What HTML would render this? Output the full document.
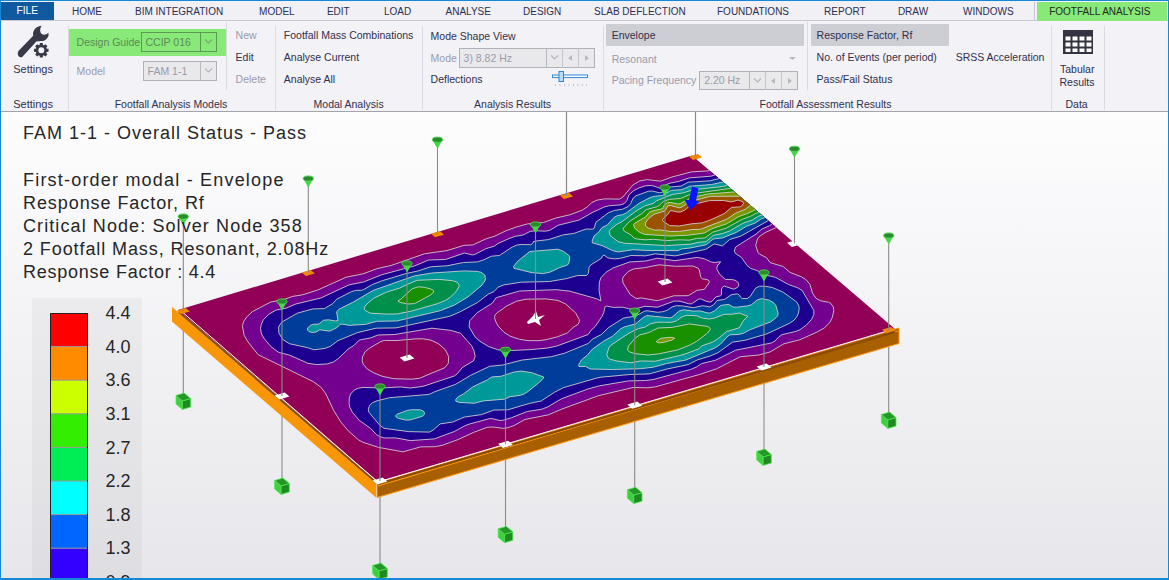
<!DOCTYPE html>
<html><head><meta charset="utf-8">
<style>
html,body{margin:0;padding:0;}
body{width:1169px;height:580px;position:relative;overflow:hidden;background:#f3f3f7;font-family:"Liberation Sans",sans-serif;}
.t{position:absolute;white-space:nowrap;}
.b{position:absolute;box-sizing:border-box;}
</style></head><body>
<!-- tab bar -->
<div class="b" style="left:0;top:0;width:1169px;height:21px;background:#f0f0f5;border-bottom:1px solid #c9c9d1"></div>
<div class="b" style="left:1;top:2px;left:1px;width:53px;height:18px;background:#10599f"></div>
<div class="b" style="left:1034px;top:2px;width:1px;height:18px;background:#c6c6ce"></div>
<div class="b" style="left:1037px;top:2px;width:130px;height:19px;background:#88e878"></div>
<!-- ribbon -->
<div class="b" style="left:0;top:21px;width:1169px;height:91px;background:#f3f2f7;border-bottom:1px solid #a4a4ac"></div>
<!-- separators -->
<div class="b" style="left:68px;top:26px;width:1px;height:84px;background:#dadae0"></div>
<div class="b" style="left:226px;top:22px;width:1px;height:68px;background:#dadae0"></div>
<div class="b" style="left:275px;top:26px;width:1px;height:84px;background:#dadae0"></div>
<div class="b" style="left:422px;top:26px;width:1px;height:84px;background:#dadae0"></div>
<div class="b" style="left:603px;top:26px;width:1px;height:84px;background:#dadae0"></div>
<div class="b" style="left:807px;top:22px;width:1px;height:68px;background:#dadae0"></div>
<div class="b" style="left:1051px;top:26px;width:1px;height:84px;background:#dadae0"></div>
<div class="b" style="left:1104px;top:26px;width:1px;height:84px;background:#dadae0"></div>
<!-- highlights -->
<div class="b" style="left:69px;top:29px;width:157px;height:27px;background:#88e878"></div>
<div class="b" style="left:606px;top:24px;width:198px;height:22px;background:#cdcdd4"></div>
<div class="b" style="left:811px;top:24px;width:138px;height:22px;background:#cdcdd4"></div>
<!-- combos -->
<div class="b" style="left:141px;top:32px;width:76px;height:20px;border:1px solid #5a9a52;"></div>
<div class="b" style="left:200px;top:32px;width:1px;height:20px;background:#5a9a52"></div>
<div class="b" style="left:143px;top:61px;width:74px;height:20px;background:#e9e9ec;border:1px solid #b0b0b8;"></div>
<div class="b" style="left:200px;top:61px;width:1px;height:20px;background:#b8b8c0"></div>
<div class="b" style="left:459px;top:48px;width:136px;height:20px;background:#e9e9ec;border:1px solid #b0b0b8;"></div>
<div class="b" style="left:546px;top:48px;width:1px;height:20px;background:#b8b8c0"></div>
<div class="b" style="left:562px;top:48px;width:1px;height:20px;background:#c4c4cc"></div>
<div class="b" style="left:578px;top:48px;width:1px;height:20px;background:#c4c4cc"></div>
<div class="b" style="left:699px;top:71px;width:99px;height:19px;background:#e9e9ec;border:1px solid #b0b0b8;"></div>
<div class="b" style="left:749px;top:71px;width:1px;height:19px;background:#b8b8c0"></div>
<div class="b" style="left:765px;top:71px;width:1px;height:19px;background:#c4c4cc"></div>
<div class="b" style="left:781px;top:71px;width:1px;height:19px;background:#c4c4cc"></div>
<svg style="position:absolute;left:0;top:0" width="1169" height="112">
 <g fill="none" stroke-width="1.1">
  <path d="M205 39.5L208.5 43L212 39.5" stroke="#7aa874"/>
  <path d="M205 68.5L208.5 72L212 68.5" stroke="#b4b4bc"/>
  <path d="M551 55.5L554.5 59L558 55.5" stroke="#b4b4bc"/>
  <path d="M754 78.5L757.5 82L761 78.5" stroke="#b4b4bc"/>
 </g>
 <g fill="#b8b8c0">
  <path d="M572 55L568 58L572 61Z"/><path d="M585 55L589 58L585 61Z"/>
  <path d="M775 78L771 81L775 84Z"/><path d="M788 78L792 81L788 84Z"/>
  <path d="M789 57H796L792.5 60Z"/>
 </g>
 <!-- slider -->
 <rect x="552.5" y="75" width="35" height="2.6" fill="#fff" stroke="#2d86d8" stroke-width="1"/>
 <rect x="559" y="71.5" width="4.5" height="10" fill="#bcd8f4" stroke="#2d86d8" stroke-width="1"/>
 <path d="M555 85h1M559.5 85h1M564 85h1M568.5 85h1M573 85h1M577.5 85h1M582 85h1M586 85h1" stroke="#9a9aa5" stroke-width="1"/>
 <!-- wrench + gear -->
 <g fill="#383846">
  <path d="M41.8 25.8 C36.5 26.2 32.2 30.2 33.2 35.8 L18.9 50.6 C17.1 52.6 17.6 55.9 19.6 57 C20.9 57.7 22.3 57.3 23.1 55.9 L36.6 41.2 C41.5 42.3 47.2 40.6 48.6 35.2 L48.3 32.6 C46.2 35.6 41.4 35.6 40.4 32 C39.8 29.6 40.4 27.3 41.8 25.8 Z"/>
  <circle cx="41.3" cy="50.3" r="9.2" fill="#f3f2f7"/>
  <path fill-rule="evenodd" d="M46.65 48.65 L48.55 48.83 L48.55 51.77 L46.65 51.95 L46.25 52.91 L47.47 54.39 L45.39 56.47 L43.91 55.25 L42.95 55.65 L42.77 57.55 L39.83 57.55 L39.65 55.65 L38.69 55.25 L37.21 56.47 L35.13 54.39 L36.35 52.91 L35.95 51.95 L34.05 51.77 L34.05 48.83 L35.95 48.65 L36.35 47.69 L35.13 46.21 L37.21 44.13 L38.69 45.35 L39.65 44.95 L39.83 43.05 L42.77 43.05 L42.95 44.95 L43.91 45.35 L45.39 44.13 L47.47 46.21 L46.25 47.69Z M41.30 47.30 A3 3 0 1 0 41.30 53.30 A3 3 0 1 0 41.30 47.30 Z"/>
 </g>
 <!-- table icon -->
 <rect x="1063" y="30" width="30" height="24" fill="#333342"/>
 <g fill="#ffffff">
  <rect x="1065.5" y="36.5" width="5" height="4"/><rect x="1072.5" y="36.5" width="5" height="4"/><rect x="1079.5" y="36.5" width="5" height="4"/><rect x="1086.5" y="36.5" width="5" height="4"/>
  <rect x="1065.5" y="42.5" width="5" height="4"/><rect x="1072.5" y="42.5" width="5" height="4"/><rect x="1079.5" y="42.5" width="5" height="4"/><rect x="1086.5" y="42.5" width="5" height="4"/>
  <rect x="1065.5" y="48.5" width="5" height="3.5"/><rect x="1072.5" y="48.5" width="5" height="3.5"/><rect x="1079.5" y="48.5" width="5" height="3.5"/><rect x="1086.5" y="48.5" width="5" height="3.5"/>
 </g>
</svg>
<div class="t" style="left:72.0px;top:5.54px;font-size:10px;line-height:12px;color:#2e2e52;">HOME</div>
<div class="t" style="left:135.0px;top:5.54px;font-size:10px;line-height:12px;color:#2e2e52;">BIM INTEGRATION</div>
<div class="t" style="left:259.1px;top:5.54px;font-size:10px;line-height:12px;color:#2e2e52;">MODEL</div>
<div class="t" style="left:326.9px;top:5.54px;font-size:10px;line-height:12px;color:#2e2e52;">EDIT</div>
<div class="t" style="left:384.0px;top:5.54px;font-size:10px;line-height:12px;color:#2e2e52;">LOAD</div>
<div class="t" style="left:445.5px;top:5.54px;font-size:10px;line-height:12px;color:#2e2e52;">ANALYSE</div>
<div class="t" style="left:523.0px;top:5.54px;font-size:10px;line-height:12px;color:#2e2e52;">DESIGN</div>
<div class="t" style="left:594.0px;top:5.54px;font-size:10px;line-height:12px;color:#2e2e52;">SLAB DEFLECTION</div>
<div class="t" style="left:717.0px;top:5.54px;font-size:10px;line-height:12px;color:#2e2e52;">FOUNDATIONS</div>
<div class="t" style="left:824.1px;top:5.54px;font-size:10px;line-height:12px;color:#2e2e52;">REPORT</div>
<div class="t" style="left:897.9px;top:5.54px;font-size:10px;line-height:12px;color:#2e2e52;">DRAW</div>
<div class="t" style="left:963.1px;top:5.54px;font-size:10px;line-height:12px;color:#2e2e52;">WINDOWS</div>
<div class="t" style="left:16.4px;top:4.63px;font-size:10.3px;line-height:12px;color:#ffffff;">FILE</div>
<div class="t" style="left:1049.2px;top:5.54px;font-size:10px;line-height:12px;color:#1e2a1e;">FOOTFALL ANALYSIS</div>
<div class="t" style="left:13.2px;top:63.19px;font-size:11px;line-height:12px;color:#30304c;">Settings</div>
<div class="t" style="left:13.2px;top:98.19px;font-size:11px;line-height:12px;color:#30304c;">Settings</div>
<div class="t" style="left:76.6px;top:36.06px;font-size:10.5px;line-height:12px;color:#5b8a55;">Design Guide</div>
<div class="t" style="left:76.6px;top:65.06px;font-size:10.5px;line-height:12px;color:#9a9aab;">Model</div>
<div class="t" style="left:145.5px;top:36.06px;font-size:10.5px;line-height:12px;color:#5b8a55;">CCIP 016</div>
<div class="t" style="left:147.6px;top:65.06px;font-size:10.5px;line-height:12px;color:#9a9aab;">FAM 1-1</div>
<div class="t" style="left:235.6px;top:29.06px;font-size:10.5px;line-height:12px;color:#9a9aab;">New</div>
<div class="t" style="left:235.6px;top:50.96px;font-size:10.5px;line-height:12px;color:#30304c;">Edit</div>
<div class="t" style="left:235.6px;top:72.96px;font-size:10.5px;line-height:12px;color:#9a9aab;">Delete</div>
<div class="t" style="left:114.7px;top:97.66px;font-size:10.5px;line-height:12px;color:#30304c;">Footfall Analysis Models</div>
<div class="t" style="left:283.8px;top:29.06px;font-size:10.5px;line-height:12px;color:#30304c;">Footfall Mass Combinations</div>
<div class="t" style="left:283.8px;top:51.26px;font-size:10.5px;line-height:12px;color:#30304c;">Analyse Current</div>
<div class="t" style="left:283.8px;top:73.36px;font-size:10.5px;line-height:12px;color:#30304c;">Analyse All</div>
<div class="t" style="left:313.6px;top:97.66px;font-size:10.5px;line-height:12px;color:#30304c;">Modal Analysis</div>
<div class="t" style="left:430.6px;top:29.86px;font-size:10.5px;line-height:12px;color:#30304c;">Mode Shape View</div>
<div class="t" style="left:430.6px;top:52.36px;font-size:10.5px;line-height:12px;color:#9a9aab;">Mode</div>
<div class="t" style="left:463.6px;top:52.36px;font-size:10.5px;line-height:12px;color:#9a9aab;">3) 8.82 Hz</div>
<div class="t" style="left:430.6px;top:72.96px;font-size:10.5px;line-height:12px;color:#30304c;">Deflections</div>
<div class="t" style="left:474.1px;top:97.96px;font-size:10.5px;line-height:12px;color:#30304c;">Analysis Results</div>
<div class="t" style="left:611.7px;top:29.26px;font-size:10.5px;line-height:12px;color:#30304c;">Envelope</div>
<div class="t" style="left:611.7px;top:52.56px;font-size:10.5px;line-height:12px;color:#9a9aab;">Resonant</div>
<div class="t" style="left:611.7px;top:74.16px;font-size:10.5px;line-height:12px;color:#9a9aab;">Pacing Frequency</div>
<div class="t" style="left:704.2px;top:74.16px;font-size:10.5px;line-height:12px;color:#9a9aab;">2.20 Hz</div>
<div class="t" style="left:759.5px;top:97.96px;font-size:10.5px;line-height:12px;color:#30304c;">Footfall Assessment Results</div>
<div class="t" style="left:816.6px;top:28.86px;font-size:10.5px;line-height:12px;color:#30304c;">Response Factor, Rf</div>
<div class="t" style="left:816.6px;top:51.36px;font-size:10.5px;line-height:12px;color:#30304c;">No. of Events (per period)</div>
<div class="t" style="left:816.6px;top:73.36px;font-size:10.5px;line-height:12px;color:#30304c;">Pass/Fail Status</div>
<div class="t" style="left:955.7px;top:51.36px;font-size:10.5px;line-height:12px;color:#30304c;">SRSS Acceleration</div>
<div class="t" style="left:1060.0px;top:63.16px;font-size:10.5px;line-height:12px;color:#30304c;">Tabular</div>
<div class="t" style="left:1059.5px;top:75.86px;font-size:10.5px;line-height:12px;color:#30304c;">Results</div>
<div class="t" style="left:1065.5px;top:97.66px;font-size:10.5px;line-height:12px;color:#30304c;">Data</div>
<!-- viewport -->
<svg style="position:absolute;left:0;top:112px" width="1169" height="468" viewBox="0 112 1169 468">
 <defs><linearGradient id="bg" x1="0" y1="0" x2="0" y2="1"><stop offset="0" stop-color="#fdfdfe"/><stop offset="1" stop-color="#e7e7eb"/></linearGradient></defs>
 <rect x="0" y="112" width="1169" height="468" fill="url(#bg)"/>
<rect x="32" y="298" width="110" height="290" fill="#000" fill-opacity="0.035"/>
<rect x="50" y="313.0" width="38" height="33.6" fill="#ff0000"/>
<rect x="50" y="346.6" width="38" height="33.6" fill="#ff8c00"/>
<line x1="50" x2="88" y1="346.6" y2="346.6" stroke="#999" stroke-width="1"/>
<rect x="50" y="380.2" width="38" height="33.6" fill="#ccff00"/>
<line x1="50" x2="88" y1="380.2" y2="380.2" stroke="#999" stroke-width="1"/>
<rect x="50" y="413.8" width="38" height="33.6" fill="#33ee00"/>
<line x1="50" x2="88" y1="413.8" y2="413.8" stroke="#999" stroke-width="1"/>
<rect x="50" y="447.4" width="38" height="33.6" fill="#00ee55"/>
<line x1="50" x2="88" y1="447.4" y2="447.4" stroke="#999" stroke-width="1"/>
<rect x="50" y="481.0" width="38" height="33.6" fill="#00ffff"/>
<line x1="50" x2="88" y1="481.0" y2="481.0" stroke="#999" stroke-width="1"/>
<rect x="50" y="514.6" width="38" height="33.6" fill="#0066ff"/>
<line x1="50" x2="88" y1="514.6" y2="514.6" stroke="#999" stroke-width="1"/>
<rect x="50" y="548.2" width="38" height="33.6" fill="#3300ff"/>
<line x1="50" x2="88" y1="548.2" y2="548.2" stroke="#999" stroke-width="1"/>
<rect x="50" y="581.8" width="38" height="33.6" fill="#8800ff"/>
<line x1="50" x2="88" y1="581.8" y2="581.8" stroke="#999" stroke-width="1"/>
<path d="M50.5 600V313.5H87.5V600" fill="none" stroke="#222" stroke-width="1"/>
<line x1="183.3" y1="311.0" x2="183.3" y2="397.0" stroke="#8a8a8a" stroke-width="1.1"/>
<line x1="308.3" y1="273.0" x2="308.3" y2="359.0" stroke="#8a8a8a" stroke-width="1.1"/>
<line x1="437.5" y1="234.2" x2="437.5" y2="320.2" stroke="#8a8a8a" stroke-width="1.1"/>
<line x1="566.5" y1="195.9" x2="566.5" y2="281.9" stroke="#8a8a8a" stroke-width="1.1"/>
<line x1="695.5" y1="157.0" x2="695.5" y2="243.0" stroke="#8a8a8a" stroke-width="1.1"/>
<line x1="282.0" y1="396.0" x2="282.0" y2="482.0" stroke="#8a8a8a" stroke-width="1.1"/>
<line x1="407.0" y1="358.0" x2="407.0" y2="444.0" stroke="#8a8a8a" stroke-width="1.1"/>
<line x1="535.5" y1="319.0" x2="535.5" y2="405.0" stroke="#8a8a8a" stroke-width="1.1"/>
<line x1="665.0" y1="282.0" x2="665.0" y2="368.0" stroke="#8a8a8a" stroke-width="1.1"/>
<line x1="794.5" y1="243.3" x2="794.5" y2="329.3" stroke="#8a8a8a" stroke-width="1.1"/>
<line x1="380.0" y1="481.0" x2="380.0" y2="567.0" stroke="#8a8a8a" stroke-width="1.1"/>
<line x1="505.5" y1="444.3" x2="505.5" y2="530.3" stroke="#8a8a8a" stroke-width="1.1"/>
<line x1="634.7" y1="405.2" x2="634.7" y2="491.2" stroke="#8a8a8a" stroke-width="1.1"/>
<line x1="764.0" y1="367.0" x2="764.0" y2="453.0" stroke="#8a8a8a" stroke-width="1.1"/>
<line x1="888.7" y1="330.0" x2="888.7" y2="416.0" stroke="#8a8a8a" stroke-width="1.1"/>
<polygon points="176.0,395.5 182.4,400.9 182.4,409.4 176.0,404.0" fill="#3fcf3f" stroke="#4ee64e" stroke-width="0.8"/><polygon points="182.4,400.9 190.6,398.5 190.6,407.0 182.4,409.4" fill="#1f8a22" stroke="#4ee64e" stroke-width="0.8"/><polygon points="176.0,395.5 184.2,393.1 190.6,398.5 182.4,400.9" fill="#25962a" stroke="#4ee64e" stroke-width="0.8"/>
<polygon points="274.7,480.5 281.1,485.9 281.1,494.4 274.7,489.0" fill="#3fcf3f" stroke="#4ee64e" stroke-width="0.8"/><polygon points="281.1,485.9 289.3,483.5 289.3,492.0 281.1,494.4" fill="#1f8a22" stroke="#4ee64e" stroke-width="0.8"/><polygon points="274.7,480.5 282.9,478.1 289.3,483.5 281.1,485.9" fill="#25962a" stroke="#4ee64e" stroke-width="0.8"/>
<polygon points="372.7,565.5 379.1,570.9 379.1,579.4 372.7,574.0" fill="#3fcf3f" stroke="#4ee64e" stroke-width="0.8"/><polygon points="379.1,570.9 387.3,568.5 387.3,577.0 379.1,579.4" fill="#1f8a22" stroke="#4ee64e" stroke-width="0.8"/><polygon points="372.7,565.5 380.9,563.1 387.3,568.5 379.1,570.9" fill="#25962a" stroke="#4ee64e" stroke-width="0.8"/>
<polygon points="498.2,528.8 504.6,534.2 504.6,542.7 498.2,537.3" fill="#3fcf3f" stroke="#4ee64e" stroke-width="0.8"/><polygon points="504.6,534.2 512.8,531.8 512.8,540.3 504.6,542.7" fill="#1f8a22" stroke="#4ee64e" stroke-width="0.8"/><polygon points="498.2,528.8 506.4,526.4 512.8,531.8 504.6,534.2" fill="#25962a" stroke="#4ee64e" stroke-width="0.8"/>
<polygon points="627.4,489.7 633.8,495.1 633.8,503.6 627.4,498.2" fill="#3fcf3f" stroke="#4ee64e" stroke-width="0.8"/><polygon points="633.8,495.1 642.0,492.7 642.0,501.2 633.8,503.6" fill="#1f8a22" stroke="#4ee64e" stroke-width="0.8"/><polygon points="627.4,489.7 635.6,487.3 642.0,492.7 633.8,495.1" fill="#25962a" stroke="#4ee64e" stroke-width="0.8"/>
<polygon points="756.7,451.5 763.1,456.9 763.1,465.4 756.7,460.0" fill="#3fcf3f" stroke="#4ee64e" stroke-width="0.8"/><polygon points="763.1,456.9 771.3,454.5 771.3,463.0 763.1,465.4" fill="#1f8a22" stroke="#4ee64e" stroke-width="0.8"/><polygon points="756.7,451.5 764.9,449.1 771.3,454.5 763.1,456.9" fill="#25962a" stroke="#4ee64e" stroke-width="0.8"/>
<polygon points="881.4,414.5 887.8,419.9 887.8,428.4 881.4,423.0" fill="#3fcf3f" stroke="#4ee64e" stroke-width="0.8"/><polygon points="887.8,419.9 896.0,417.5 896.0,426.0 887.8,428.4" fill="#1f8a22" stroke="#4ee64e" stroke-width="0.8"/><polygon points="881.4,414.5 889.6,412.1 896.0,417.5 887.8,419.9" fill="#25962a" stroke="#4ee64e" stroke-width="0.8"/>
<polygon points="172.0,307.0 376.0,483.0 376.0,497.5 172.0,321.5" fill="#f99608"/>
<polygon points="377.0,483.0 899.0,328.0 899.0,343.5 377.0,497.5" fill="#a85f00" stroke="#ff9a10" stroke-width="1"/>
<line x1="378.0" y1="486.0" x2="898.0" y2="331.0" stroke="#ff9a10" stroke-width="1"/>
<polygon points="178.0,310.0 692.0,155.4 895.0,329.0 378.0,482.0" fill="#910056"/>
<clipPath id="pc"><polygon points="178.0,310.0 692.0,155.4 895.0,329.0 378.0,482.0"/></clipPath>
<g clip-path="url(#pc)" fill-rule="evenodd" stroke="#d4d4d4" stroke-width="0.85"><path fill="#73008e" d="M639.9 180.9 647.2 179.6 660.7 181.2 671.0 177.3 691.3 171.9 707.9 170.9 714.7 169.1 779.2 226.2 765.1 232.6 759.8 236.2 757.5 238.8 755.7 245.3 758.0 252.5 759.4 254.0 766.7 257.8 770.1 262.6 783.3 266.6 790.0 272.4 801.5 276.9 805.9 279.5 809.9 284.2 812.5 293.2 815.8 298.1 820.2 300.7 828.5 302.2 830.8 303.4 833.2 306.7 833.8 310.6 832.4 317.2 829.8 322.6 824.2 328.0 817.1 332.0 799.7 339.8 783.9 343.8 769.9 352.0 758.7 355.0 740.3 356.7 716.4 368.9 699.5 374.5 655.5 386.8 647.9 387.8 633.0 387.5 598.7 395.6 562.0 409.0 548.4 414.8 524.8 419.5 514.3 425.4 508.2 427.7 503.3 428.4 493.0 427.0 487.4 427.2 473.3 432.5 458.2 439.5 442.0 445.4 434.7 446.7 420.6 446.9 403.0 451.8 378.5 447.4 363.1 442.3 358.4 439.8 348.5 431.1 340.7 421.8 333.6 410.3 325.5 393.2 320.6 386.9 312.8 381.4 258.2 354.7 248.0 342.0 244.1 335.3 242.4 325.7 243.6 321.7 246.7 316.9 252.3 311.7 270.4 302.2 284.5 299.3 292.7 296.4 302.6 294.8 317.5 290.1 346.3 277.2 362.9 273.9 377.2 268.6 391.1 265.5 424.4 253.8 447.0 250.6 464.2 245.3 472.7 245.0 486.1 238.8 494.7 236.2 506.1 230.7 516.4 227.0 527.6 223.9 543.5 222.5 555.9 218.0 569.9 214.8 582.2 210.2 587.5 206.7 591.4 202.8 597.1 200.1 604.6 198.9 619.5 199.1 622.9 197.0 632.8 185.1 639.9 180.9ZM380.9 341.5 369.8 348.0 365.3 351.6 362.5 356.8 362.2 360.8 363.3 364.4 367.3 369.0 373.9 372.9 382.3 376.3 393.9 378.7 411.7 379.2 419.4 378.3 444.9 367.7 448.3 363.2 448.7 356.5 445.3 349.7 438.7 343.8 431.0 340.2 423.2 338.8 416.2 338.8 396.1 340.6 384.5 340.4 380.9 341.5ZM507.1 305.8 497.4 312.6 494.9 315.2 494.5 317.4 495.5 321.0 498.2 326.1 503.9 332.2 510.2 336.2 519.5 339.3 528.1 340.6 538.7 340.7 546.2 339.7 557.5 336.8 567.5 332.9 573.0 327.5 578.1 324.3 579.4 321.4 579.2 319.5 575.6 312.8 565.7 304.0 558.0 300.4 546.1 298.9 526.0 299.2 516.6 301.2 507.1 305.8ZM628.2 271.5 623.2 277.0 622.5 279.1 623.0 282.9 630.2 294.5 636.3 298.7 641.2 297.9 655.9 300.5 658.7 300.4 673.9 295.8 688.3 295.7 696.9 290.4 704.4 289.3 709.1 282.8 709.2 280.8 707.1 279.5 702.4 278.9 700.8 277.4 699.3 270.0 698.3 268.3 692.8 266.0 675.4 266.3 659.0 264.8 644.7 267.7 634.3 268.8 628.2 271.5Z"/>
<path fill="#1e0090" d="M633.5 190.8 639.0 187.9 645.4 185.8 651.7 185.4 659.7 188.0 669.1 183.4 678.6 181.4 689.4 177.9 710.9 176.2 719.6 173.5 774.5 222.0 769.7 225.6 761.9 229.1 756.0 234.1 735.5 247.1 734.3 251.2 735.3 253.3 741.4 257.4 747.1 265.5 750.7 268.4 757.0 270.5 767.1 275.3 775.6 277.4 788.7 284.6 797.8 287.8 802.1 290.4 813.8 310.4 813.9 314.3 811.6 319.4 806.4 325.1 800.0 329.7 796.0 331.4 782.2 334.6 778.9 336.8 774.9 341.1 771.3 343.0 735.8 350.2 715.3 360.3 701.6 363.6 696.7 366.9 690.8 369.4 653.0 379.6 645.4 380.5 628.4 380.9 599.2 385.9 588.2 388.9 561.7 398.7 547.9 406.8 542.0 409.2 527.2 411.5 511.3 417.8 502.6 420.3 500.0 420.5 491.9 418.6 489.2 418.7 469.3 424.1 465.2 425.6 454.6 431.4 434.4 438.9 410.3 440.6 395.7 437.9 384.1 437.9 379.8 436.7 376.3 434.5 370.6 428.4 359.1 420.2 352.5 412.4 349.9 407.4 349.1 403.7 349.3 397.8 350.6 394.0 354.5 389.9 358.3 388.2 363.2 387.4 382.2 388.0 400.3 386.9 410.2 388.0 422.9 386.4 454.3 376.0 457.4 373.6 462.2 367.6 473.5 360.8 475.2 356.4 474.0 350.9 471.6 345.7 460.7 333.3 450.8 330.4 431.9 328.2 394.9 334.5 378.0 335.0 370.0 338.1 360.3 339.8 358.5 340.7 354.6 344.9 348.0 349.2 338.4 358.5 333.6 361.9 327.3 363.9 316.5 364.6 307.9 363.3 289.4 355.1 278.7 352.4 271.2 346.8 264.5 339.0 261.5 334.1 260.5 328.5 261.3 324.3 263.4 319.7 268.9 314.2 276.1 310.0 286.1 308.2 295.8 304.0 320.8 298.0 349.2 284.8 363.5 282.0 381.5 274.8 414.9 265.8 428.6 260.0 445.5 259.5 464.4 253.0 472.4 254.9 474.8 254.5 485.8 248.7 494.5 246.1 497.6 243.7 509.1 238.5 515.3 236.3 522.8 235.1 530.2 231.4 535.3 230.7 545.3 231.2 549.6 230.4 558.3 225.2 578.9 220.1 593.1 212.1 604.7 206.8 609.4 205.7 620.2 204.9 624.4 203.5 626.8 200.5 629.1 194.7 633.5 190.8ZM494.8 299.6 492.5 303.0 477.2 312.7 469.7 320.8 469.1 326.9 475.1 336.9 480.0 341.3 488.6 346.5 497.6 349.7 507.4 350.7 530.8 349.6 547.1 348.1 556.6 346.1 588.2 334.5 590.9 330.4 595.2 326.5 601.8 316.7 603.9 312.2 604.9 306.9 606.8 306.1 613.3 307.4 622.7 307.2 632.3 309.6 645.0 306.3 657.6 307.2 674.0 301.1 680.0 301.2 688.8 303.8 691.7 303.8 698.3 299.3 700.6 298.8 706.5 301.4 710.2 302.1 712.1 301.2 716.0 296.9 720.6 295.8 721.4 294.8 721.5 288.9 722.5 287.2 724.2 286.1 733.7 289.2 737.4 287.5 738.6 285.8 738.6 283.8 737.8 282.1 734.9 280.2 731.1 279.4 725.4 279.5 719.7 274.4 716.7 268.7 717.7 264.9 719.2 264.1 720.5 261.7 714.9 262.5 711.5 262.1 704.1 258.7 697.4 257.4 674.8 260.7 657.3 258.2 645.9 261.0 629.5 262.0 612.9 268.0 606.1 272.2 600.9 277.7 599.4 282.1 599.0 290.1 600.9 300.9 596.4 298.7 569.4 291.1 556.0 289.7 519.6 291.0 497.6 297.3 495.7 298.1 494.8 299.6Z"/>
<path fill="#003c99" d="M636.1 195.7 648.6 191.2 652.7 191.1 659.3 192.8 661.7 192.4 670.2 187.0 681.0 186.1 688.3 182.2 710.2 180.8 723.9 177.3 771.1 219.0 740.7 236.2 729.7 239.5 722.4 245.9 714.3 243.9 705.8 249.3 675.2 255.9 655.3 253.8 645.9 255.8 630.9 255.5 619.7 258.5 614.2 258.9 607.9 257.9 604.0 255.0 602.3 256.1 601.7 258.1 590.5 265.1 589.1 267.5 588.3 273.6 586.4 275.5 577.7 275.5 566.6 278.6 549.6 281.5 521.2 282.2 503.8 284.9 497.9 287.3 494.0 291.6 488.2 294.2 477.4 302.6 459.4 312.2 449.6 316.3 396.0 327.9 376.1 328.2 357.8 332.5 338.0 340.6 330.3 346.4 325.0 348.4 313.9 349.8 307.8 347.7 289.4 343.7 282.7 339.5 278.8 332.8 278.6 326.9 281.7 322.1 297.6 313.1 313.0 308.9 324.3 308.6 332.9 303.5 336.7 299.2 351.4 291.7 355.6 290.4 361.4 290.3 363.5 289.6 372.3 284.6 382.4 280.7 406.2 273.5 417.9 271.0 430.5 266.8 446.9 265.8 463.5 262.5 477.5 261.9 483.9 259.8 491.4 256.2 499.4 255.5 512.2 247.1 516.7 245.1 521.0 244.5 530.9 244.7 533.1 242.8 533.2 241.7 535.5 241.1 548.4 239.6 563.4 234.8 573.6 233.5 586.1 229.0 592.2 229.2 594.1 228.4 595.9 222.2 608.6 212.7 614.6 210.4 622.3 209.3 628.0 206.6 630.6 203.7 633.1 198.2 636.1 195.7ZM623.4 318.1 635.7 316.1 644.6 311.1 647.9 310.8 657.6 312.3 662.8 311.7 667.1 310.3 672.0 307.0 676.4 305.7 682.5 305.9 693.3 307.7 702.7 305.7 709.8 306.9 713.5 304.9 717.1 300.5 724.6 299.4 731.1 294.8 736.0 294.0 737.6 293.9 739.7 295.3 740.4 297.0 742.1 298.5 747.1 298.6 750.3 296.3 755.6 288.1 759.4 286.2 765.3 286.3 772.3 287.5 783.2 292.1 796.6 301.9 798.6 305.2 799.2 308.4 798.5 313.0 796.9 316.7 794.1 320.2 789.7 323.2 766.8 333.9 744.9 340.3 732.5 342.2 718.2 352.6 710.3 355.9 697.4 359.9 688.2 364.6 667.1 369.0 649.4 373.9 629.8 374.5 600.9 377.2 596.3 378.2 563.5 387.6 554.4 392.3 541.2 401.0 529.5 403.4 507.8 409.8 493.8 410.1 481.5 414.6 464.2 417.1 452.6 422.1 440.2 423.9 433.0 430.2 429.4 432.1 408.6 431.6 384.0 428.3 380.1 425.6 368.9 412.3 368.3 409.3 369.6 405.4 372.4 402.8 376.1 401.1 389.6 397.7 429.3 394.4 434.8 391.7 455.4 384.4 470.9 375.2 489.6 366.3 502.7 365.0 521.8 360.1 551.3 356.7 564.6 353.2 588.4 343.4 592.3 339.2 601.4 334.5 608.3 327.8 623.4 318.1Z"/>
<path fill="#009999" d="M650.0 197.6 654.4 196.3 662.3 195.5 671.2 190.4 682.0 189.6 689.9 186.2 711.5 184.5 728.0 180.9 768.3 216.5 761.8 218.6 755.1 223.1 746.5 226.3 736.4 232.4 722.2 238.0 714.3 238.8 712.4 239.6 706.4 244.7 689.7 248.1 681.8 248.8 677.9 250.6 646.1 250.4 633.0 249.7 618.1 252.0 612.6 250.6 602.1 245.6 592.3 242.8 592.2 240.9 594.0 236.0 598.6 232.3 602.0 227.6 607.6 224.8 613.9 217.5 617.6 215.5 622.5 214.7 626.3 212.9 638.9 203.4 650.0 197.6ZM406.4 278.7 414.7 275.8 431.9 273.0 464.5 270.9 477.2 271.4 480.9 272.2 484.8 275.0 485.5 278.8 484.8 281.0 481.1 286.0 468.0 296.9 454.2 305.2 440.2 310.7 396.8 321.0 376.8 321.3 365.8 324.3 349.5 325.4 342.0 324.0 339.8 324.5 337.3 327.4 329.9 331.1 319.7 329.8 316.4 331.9 312.2 332.6 309.0 331.6 307.5 330.1 307.7 328.1 310.2 325.4 313.3 324.3 319.0 324.1 323.3 320.3 328.5 319.8 335.7 321.0 337.9 320.4 336.6 311.7 339.3 309.0 352.3 302.6 373.2 290.4 406.4 278.7ZM529.8 251.5 557.9 249.2 563.6 251.4 569.2 255.7 569.7 257.5 569.0 262.7 568.1 264.5 566.3 265.5 559.8 267.5 550.4 272.0 543.4 273.6 532.1 272.7 514.0 268.3 513.6 266.4 517.6 261.3 529.8 251.5ZM643.2 317.5 646.7 315.5 669.9 317.9 672.0 317.2 679.4 310.9 684.0 309.8 693.0 311.1 700.2 310.9 708.1 313.1 710.7 312.8 714.4 310.9 720.3 305.8 722.4 305.1 728.9 304.4 733.1 307.0 736.5 307.2 746.8 306.0 751.3 304.8 757.3 299.9 761.7 298.6 769.3 300.2 773.7 302.8 776.1 306.0 778.1 313.2 777.9 315.3 776.1 317.7 770.7 321.9 750.3 329.6 743.0 333.5 738.3 334.5 730.0 334.8 728.2 335.9 720.4 344.3 715.5 347.7 685.9 360.0 666.6 363.5 653.4 367.2 640.6 368.7 612.4 369.5 590.2 369.0 585.6 366.5 579.0 366.5 578.7 364.7 581.5 359.9 587.3 355.2 592.2 349.3 603.4 341.3 612.3 336.4 620.9 328.6 624.7 326.8 635.7 323.8 643.2 317.5ZM487.7 379.7 490.8 377.4 493.0 376.8 501.1 376.3 513.7 372.1 521.3 371.1 531.9 372.7 543.7 377.0 542.5 379.3 539.6 382.1 528.3 391.3 524.3 393.9 520.2 395.4 510.1 396.7 504.4 399.2 483.1 400.9 474.2 403.3 458.6 402.3 455.8 401.2 455.8 399.2 458.2 396.9 463.5 393.9 472.7 386.9 487.7 379.7ZM397.1 414.2 407.2 410.4 412.2 409.7 420.2 409.8 423.2 410.9 424.4 412.5 424.3 414.4 422.6 416.2 409.7 420.1 405.5 420.0 398.3 418.3 396.1 417.0 395.8 415.6 397.1 414.2Z"/>
<path fill="#00904a" d="M666.6 196.7 672.8 194.4 682.9 192.9 693.8 189.7 722.5 186.5 731.8 184.3 765.5 214.1 758.9 216.0 751.9 220.2 743.4 223.1 729.2 231.2 722.9 233.4 713.4 235.4 705.9 241.7 697.9 242.4 691.0 244.1 666.4 245.6 624.0 243.2 617.9 241.6 610.2 235.5 609.1 231.9 610.5 229.5 616.3 224.7 621.8 221.8 636.0 211.1 644.8 205.9 653.6 203.3 656.5 200.8 666.6 196.7ZM407.1 284.5 416.9 280.3 439.2 279.4 452.7 280.7 456.0 281.7 458.1 283.0 459.0 284.7 458.9 286.7 456.2 291.5 450.6 296.9 445.7 300.3 437.8 303.6 411.5 311.1 397.3 313.9 387.3 314.1 370.4 313.2 365.6 310.7 364.3 309.2 364.5 307.1 366.2 304.7 373.6 298.3 386.7 292.1 399.6 288.1 407.1 284.5ZM650.3 323.8 657.3 322.2 671.9 322.3 676.2 320.9 682.8 316.5 687.2 315.2 696.8 315.9 702.3 318.1 709.0 319.0 714.0 318.2 724.1 314.3 732.7 314.2 739.3 313.0 747.9 316.3 743.2 320.8 739.4 327.7 726.4 331.7 717.4 339.2 712.2 342.3 701.7 345.9 699.2 348.7 682.9 354.8 655.3 361.2 640.5 361.0 631.0 362.8 617.1 361.1 610.2 359.2 608.1 357.9 606.8 354.4 608.8 347.9 610.8 345.3 629.0 333.1 638.3 328.6 645.3 327.0 650.3 323.8Z"/>
<path fill="#189000" d="M663.3 201.5 669.5 199.3 680.4 198.5 688.3 195.1 695.0 193.3 735.7 187.7 762.4 211.4 755.9 213.4 750.5 216.3 742.1 219.4 725.9 228.3 712.7 232.2 704.8 238.1 696.4 238.4 689.5 240.2 680.3 239.8 666.7 240.6 653.4 239.3 645.1 239.8 637.9 239.1 634.1 238.2 631.2 235.1 624.4 231.2 623.1 229.7 624.0 227.4 629.8 221.2 641.8 213.6 646.2 209.7 657.2 206.6 659.1 205.6 663.3 201.5ZM412.1 288.8 418.5 286.8 424.2 287.3 431.1 289.1 433.4 290.4 433.7 292.3 429.9 295.4 414.6 303.6 407.7 304.0 400.1 302.4 397.9 301.1 400.8 299.2 412.1 288.8ZM652.4 330.7 658.1 328.0 672.0 327.4 689.4 323.9 707.4 326.4 709.7 327.7 710.4 329.4 707.5 333.1 696.6 341.4 689.4 345.3 677.3 350.0 658.5 353.9 648.1 355.0 635.3 353.7 628.8 351.7 627.6 350.1 628.3 346.0 635.3 338.1 639.7 334.9 648.8 332.6 652.4 330.7Z"/>
<path fill="#7a9900" d="M664.3 205.0 667.5 202.7 670.2 202.4 677.7 203.9 680.3 203.6 691.2 197.7 707.6 194.0 740.0 191.5 758.9 208.2 747.3 213.5 738.9 216.5 726.6 223.8 711.8 228.8 704.7 232.9 702.3 233.4 686.9 235.3 670.2 236.0 644.9 234.4 639.9 232.5 634.6 228.2 633.5 224.6 634.9 223.1 645.6 216.9 649.2 212.4 651.0 211.4 662.6 208.7 664.3 205.0ZM661.0 338.2 670.6 337.3 674.8 338.1 671.9 340.1 663.0 342.5 658.4 342.9 656.2 341.6 661.0 338.2Z"/>
<path fill="#9a5400" d="M668.0 205.7 670.8 205.5 679.1 207.8 681.5 207.3 689.8 201.6 710.3 196.4 745.3 196.2 753.0 203.1 745.4 209.2 735.3 213.3 727.1 219.0 700.6 229.3 692.0 229.5 679.6 231.4 670.9 231.5 660.3 229.9 654.6 230.1 648.3 228.0 646.3 226.7 645.4 225.0 645.5 223.0 648.0 219.1 654.1 214.2 665.1 210.9 668.0 205.7Z"/>
<path fill="#990000" d="M670.5 210.5 678.2 212.1 680.9 211.9 684.7 210.1 690.8 205.1 709.2 200.6 723.7 200.5 731.2 201.9 738.0 200.1 742.8 201.7 743.4 203.5 741.7 206.0 739.7 206.9 731.6 207.4 724.0 213.7 710.5 219.9 702.2 222.9 691.5 223.8 679.3 226.0 669.8 225.6 663.3 221.6 662.4 219.9 662.8 219.2 667.1 215.3 670.5 210.5Z"/></g>
<polyline points="179.0,312.0 378.0,484.0 895.0,332.0" fill="none" stroke="#8c4a00" stroke-width="2"/>
<polyline points="180.0,310.0 378.0,482.0 894.0,329.0" fill="none" stroke="#ffffff" stroke-width="1"/>
<polygon points="176.8,310.5 185.8,307.9 189.8,311.5 180.8,314.1" fill="#f08a00"/>
<polygon points="301.8,272.5 310.8,269.9 314.8,273.5 305.8,276.1" fill="#f08a00"/>
<polygon points="431.0,233.7 440.0,231.1 444.0,234.7 435.0,237.3" fill="#f08a00"/>
<polygon points="560.0,195.4 569.0,192.8 573.0,196.4 564.0,199.0" fill="#f08a00"/>
<polygon points="689.0,156.5 698.0,153.9 702.0,157.5 693.0,160.1" fill="#f08a00"/>
<polygon points="274.6,395.4 284.6,392.4 289.4,396.6 279.4,399.6" fill="#ffffff"/>
<polygon points="399.6,357.4 409.6,354.4 414.4,358.6 404.4,361.6" fill="#ffffff"/>
<path d="M527 322L533 316L536 311L538 317L545 315L539 320L541 326L535 322L528 324Z" fill="#ffffff"/>
<polygon points="657.6,281.4 667.6,278.4 672.4,282.6 662.4,285.6" fill="#ffffff"/>
<polygon points="787.1,242.7 797.1,239.7 801.9,243.9 791.9,246.9" fill="#ffffff"/>
<polygon points="372.6,480.4 382.6,477.4 387.4,481.6 377.4,484.6" fill="#ffffff"/>
<polygon points="498.1,443.7 508.1,440.7 512.9,444.9 502.9,447.9" fill="#ffffff"/>
<polygon points="627.3,404.6 637.3,401.6 642.1,405.8 632.1,408.8" fill="#ffffff"/>
<polygon points="756.6,366.4 766.6,363.4 771.4,367.6 761.4,370.6" fill="#ffffff"/>
<polygon points="882.2,329.5 891.2,326.9 895.2,330.5 886.2,333.1" fill="#f08a00"/>
<polygon points="692,186.5 698.5,188.5 696,200.5 699.5,202 690,210 684.5,199.5 689,200" fill="#0a14ff"/>
<line x1="183.3" y1="223.0" x2="183.3" y2="311.0" stroke="#8a8a8a" stroke-width="1.1"/>
<line x1="308.3" y1="185.0" x2="308.3" y2="273.0" stroke="#8a8a8a" stroke-width="1.1"/>
<line x1="437.5" y1="146.2" x2="437.5" y2="234.2" stroke="#8a8a8a" stroke-width="1.1"/>
<line x1="566.5" y1="107.9" x2="566.5" y2="195.9" stroke="#8a8a8a" stroke-width="1.1"/>
<line x1="695.5" y1="69.0" x2="695.5" y2="157.0" stroke="#8a8a8a" stroke-width="1.1"/>
<line x1="282.0" y1="308.0" x2="282.0" y2="396.0" stroke="#8a8a8a" stroke-width="1.1"/>
<line x1="407.0" y1="270.0" x2="407.0" y2="358.0" stroke="#8a8a8a" stroke-width="1.1"/>
<line x1="535.5" y1="231.0" x2="535.5" y2="319.0" stroke="#8a8a8a" stroke-width="1.1"/>
<line x1="665.0" y1="194.0" x2="665.0" y2="282.0" stroke="#8a8a8a" stroke-width="1.1"/>
<line x1="794.5" y1="155.3" x2="794.5" y2="243.3" stroke="#8a8a8a" stroke-width="1.1"/>
<line x1="380.0" y1="393.0" x2="380.0" y2="481.0" stroke="#8a8a8a" stroke-width="1.1"/>
<line x1="505.5" y1="356.3" x2="505.5" y2="444.3" stroke="#8a8a8a" stroke-width="1.1"/>
<line x1="634.7" y1="317.2" x2="634.7" y2="405.2" stroke="#8a8a8a" stroke-width="1.1"/>
<line x1="764.0" y1="279.0" x2="764.0" y2="367.0" stroke="#8a8a8a" stroke-width="1.1"/>
<line x1="888.7" y1="242.0" x2="888.7" y2="330.0" stroke="#8a8a8a" stroke-width="1.1"/>
<path d="M178.2 216.5L188.4 216.5L183.3 225.5Z" fill="#44d844"/>
<ellipse cx="183.3" cy="216.5" rx="5.1" ry="2.6" fill="#2a8a2e" stroke="#48dc48" stroke-width="0.9"/>
<path d="M303.2 178.5L313.4 178.5L308.3 187.5Z" fill="#44d844"/>
<ellipse cx="308.3" cy="178.5" rx="5.1" ry="2.6" fill="#2a8a2e" stroke="#48dc48" stroke-width="0.9"/>
<path d="M432.4 139.7L442.6 139.7L437.5 148.7Z" fill="#44d844"/>
<ellipse cx="437.5" cy="139.7" rx="5.1" ry="2.6" fill="#2a8a2e" stroke="#48dc48" stroke-width="0.9"/>
<path d="M561.4 101.4L571.6 101.4L566.5 110.4Z" fill="#44d844"/>
<ellipse cx="566.5" cy="101.4" rx="5.1" ry="2.6" fill="#2a8a2e" stroke="#48dc48" stroke-width="0.9"/>
<path d="M690.4 62.5L700.6 62.5L695.5 71.5Z" fill="#44d844"/>
<ellipse cx="695.5" cy="62.5" rx="5.1" ry="2.6" fill="#2a8a2e" stroke="#48dc48" stroke-width="0.9"/>
<path d="M276.9 301.5L287.1 301.5L282.0 310.5Z" fill="#44d844"/>
<ellipse cx="282.0" cy="301.5" rx="5.1" ry="2.6" fill="#2a8a2e" stroke="#48dc48" stroke-width="0.9"/>
<path d="M401.9 263.5L412.1 263.5L407.0 272.5Z" fill="#44d844"/>
<ellipse cx="407.0" cy="263.5" rx="5.1" ry="2.6" fill="#2a8a2e" stroke="#48dc48" stroke-width="0.9"/>
<path d="M530.4 224.5L540.6 224.5L535.5 233.5Z" fill="#44d844"/>
<ellipse cx="535.5" cy="224.5" rx="5.1" ry="2.6" fill="#2a8a2e" stroke="#48dc48" stroke-width="0.9"/>
<path d="M659.9 187.5L670.1 187.5L665.0 196.5Z" fill="#44d844"/>
<ellipse cx="665.0" cy="187.5" rx="5.1" ry="2.6" fill="#2a8a2e" stroke="#48dc48" stroke-width="0.9"/>
<path d="M789.4 148.8L799.6 148.8L794.5 157.8Z" fill="#44d844"/>
<ellipse cx="794.5" cy="148.8" rx="5.1" ry="2.6" fill="#2a8a2e" stroke="#48dc48" stroke-width="0.9"/>
<path d="M374.9 386.5L385.1 386.5L380.0 395.5Z" fill="#44d844"/>
<ellipse cx="380.0" cy="386.5" rx="5.1" ry="2.6" fill="#2a8a2e" stroke="#48dc48" stroke-width="0.9"/>
<path d="M500.4 349.8L510.6 349.8L505.5 358.8Z" fill="#44d844"/>
<ellipse cx="505.5" cy="349.8" rx="5.1" ry="2.6" fill="#2a8a2e" stroke="#48dc48" stroke-width="0.9"/>
<path d="M629.6 310.7L639.8 310.7L634.7 319.7Z" fill="#44d844"/>
<ellipse cx="634.7" cy="310.7" rx="5.1" ry="2.6" fill="#2a8a2e" stroke="#48dc48" stroke-width="0.9"/>
<path d="M758.9 272.5L769.1 272.5L764.0 281.5Z" fill="#44d844"/>
<ellipse cx="764.0" cy="272.5" rx="5.1" ry="2.6" fill="#2a8a2e" stroke="#48dc48" stroke-width="0.9"/>
<path d="M883.6 235.5L893.8 235.5L888.7 244.5Z" fill="#44d844"/>
<ellipse cx="888.7" cy="235.5" rx="5.1" ry="2.6" fill="#2a8a2e" stroke="#48dc48" stroke-width="0.9"/>
<line x1="566.5" y1="112" x2="566.5" y2="195.9" stroke="#8a8a8a" stroke-width="1.1"/>
<line x1="695.5" y1="112" x2="695.5" y2="157.0" stroke="#8a8a8a" stroke-width="1.1"/>
</svg>
<div class="t" style="left:105.5px;top:303.26px;font-size:18px;line-height:20px;color:#262626;">4.4</div>
<div class="t" style="left:105.5px;top:336.86px;font-size:18px;line-height:20px;color:#262626;">4.0</div>
<div class="t" style="left:105.5px;top:370.46px;font-size:18px;line-height:20px;color:#262626;">3.6</div>
<div class="t" style="left:105.5px;top:404.06px;font-size:18px;line-height:20px;color:#262626;">3.1</div>
<div class="t" style="left:105.5px;top:437.66px;font-size:18px;line-height:20px;color:#262626;">2.7</div>
<div class="t" style="left:105.5px;top:471.26px;font-size:18px;line-height:20px;color:#262626;">2.2</div>
<div class="t" style="left:105.5px;top:504.86px;font-size:18px;line-height:20px;color:#262626;">1.8</div>
<div class="t" style="left:105.5px;top:538.46px;font-size:18px;line-height:20px;color:#262626;">1.3</div>
<div class="t" style="left:105.5px;top:572.06px;font-size:18px;line-height:20px;color:#262626;">0.9</div>
<div class="t" style="left:23.0px;top:123.06px;font-size:18px;line-height:20px;color:#262626;letter-spacing:1.00px">FAM 1-1 - Overall Status - Pass</div>
<div class="t" style="left:23.0px;top:169.76px;font-size:18px;line-height:20px;color:#262626;letter-spacing:1.20px">First-order modal - Envelope</div>
<div class="t" style="left:23.0px;top:192.76px;font-size:18px;line-height:20px;color:#262626;letter-spacing:0.93px">Response Factor, Rf</div>
<div class="t" style="left:23.0px;top:215.76px;font-size:18px;line-height:20px;color:#262626;letter-spacing:1.09px">Critical Node: Solver Node 358</div>
<div class="t" style="left:23.0px;top:239.16px;font-size:18px;line-height:20px;color:#262626;letter-spacing:0.91px">2 Footfall Mass, Resonant, 2.08Hz</div>
<div class="t" style="left:23.0px;top:262.36px;font-size:18px;line-height:20px;color:#262626;letter-spacing:0.76px">Response Factor : 4.4</div>
<!-- window border -->
<div class="b" style="left:0;top:0;width:1169px;height:1px;background:#1589d6"></div>
<div class="b" style="left:0;top:0;width:1px;height:580px;background:#1589d6"></div>
<div class="b" style="left:1168px;top:0;width:1px;height:580px;background:#1589d6"></div>
<div class="b" style="left:0;top:578px;width:1169px;height:2px;background:#1589d6"></div>
</body></html>
